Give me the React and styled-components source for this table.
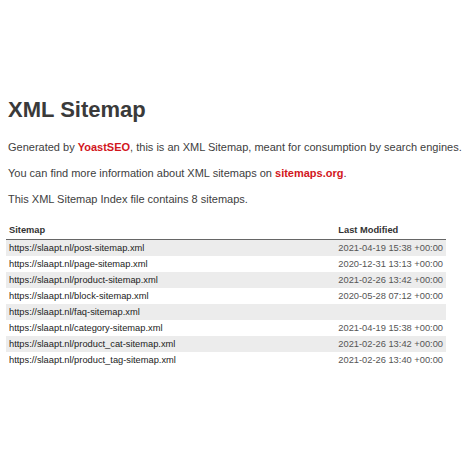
import React from "react";
import styled, { createGlobalStyle } from "styled-components";

const Global = createGlobalStyle`
  html, body { margin: 0; padding: 0; background: #fff; }
  body { font-family: "Liberation Sans", Arial, Helvetica, sans-serif; color: #444; }
`;

const Page = styled.div`
  width: 474px;
  height: 474px;
  box-sizing: border-box;
  padding: 96px 28px 0 8px;
`;

const Title = styled.h1`
  margin: 0 0 16px;
  font-size: 22px;
  line-height: 28px;
  font-weight: bold;
  color: #3a3a3a;
`;

const Para = styled.p`
  margin: 0 0 11px;
  font-size: 11px;
  line-height: 15px;
  color: #404040;
  white-space: nowrap;
`;

const Link = styled.a`
  color: #d2161c;
  font-weight: bold;
  text-decoration: none;
`;

const TableWrap = styled.div`
  margin: 17px 0 0 -2px;
`;

const Table = styled.table`
  width: 100%;
  border-collapse: collapse;
  font-size: 9.3px;
  color: #333;
`;

const Th = styled.th`
  text-align: left;
  font-weight: bold;
  padding: 0 3px;
  height: 15px;
  line-height: 12px;
  vertical-align: top;
  border-bottom: 1px solid #666;
  color: #333;
  width: ${(p) => p.$w || "auto"};
`;

const Row = styled.tr`
  background: ${(p) => (p.$alt ? "#ececec" : "#fff")};
`;

const Td = styled.td`
  padding: 0 3px;
  height: 16px;
  line-height: 16px;
  color: ${(p) => (p.$muted ? "#555" : "#222")};
  white-space: nowrap;
`;

const rows = [
  ["https://slaapt.nl/post-sitemap.xml", "2021-04-19 15:38 +00:00"],
  ["https://slaapt.nl/page-sitemap.xml", "2020-12-31 13:13 +00:00"],
  ["https://slaapt.nl/product-sitemap.xml", "2021-02-26 13:42 +00:00"],
  ["https://slaapt.nl/block-sitemap.xml", "2020-05-28 07:12 +00:00"],
  ["https://slaapt.nl/faq-sitemap.xml", ""],
  ["https://slaapt.nl/category-sitemap.xml", "2021-04-19 15:38 +00:00"],
  ["https://slaapt.nl/product_cat-sitemap.xml", "2021-02-26 13:42 +00:00"],
  ["https://slaapt.nl/product_tag-sitemap.xml", "2021-02-26 13:40 +00:00"],
];

export default function App() {
  return (
    <Page>
      <Global />
      <Title>XML Sitemap</Title>
      <Para>
        Generated by <Link href="#">YoastSEO</Link>, this is an XML Sitemap, meant for consumption by search engines.
      </Para>
      <Para>
        You can find more information about XML sitemaps on <Link href="#">sitemaps.org</Link>.
      </Para>
      <Para>This XML Sitemap Index file contains 8 sitemaps.</Para>
      <TableWrap>
        <Table>
          <thead>
            <tr>
              <Th>Sitemap</Th>
              <Th $w="102px">Last Modified</Th>
            </tr>
          </thead>
          <tbody>
            {rows.map(([u, d], i) => (
              <Row key={u} $alt={i % 2 === 0}>
                <Td>{u}</Td>
                <Td $muted>{d}</Td>
              </Row>
            ))}
          </tbody>
        </Table>
      </TableWrap>
    </Page>
  );
}
